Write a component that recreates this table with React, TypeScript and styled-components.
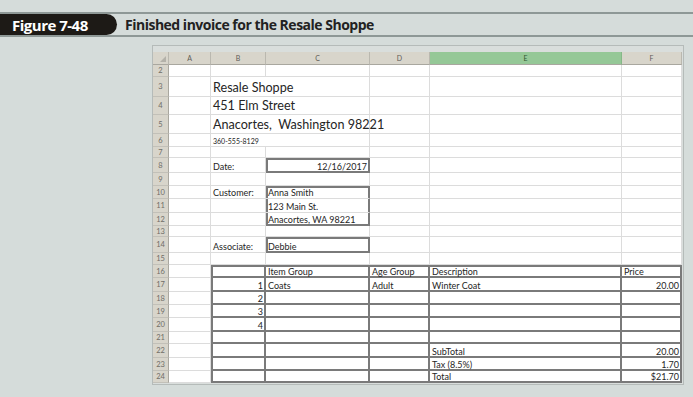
import React from "react";
import styled, { createGlobalStyle } from "styled-components";

const GlobalStyle = createGlobalStyle`
  body {
    margin: 0;
    background: #d5dcda;
  }
`;

const COLS = [42, 55, 104, 60, 192, 60];
const LETTERS = ["A", "B", "C", "D", "E", "F"];
const HEIGHTS = [12, 20, 18, 19, 13, 11, 15, 13, 13, 14, 13, 11, 16, 12, 13, 14, 13, 13, 14, 12, 14, 13, 12];
const LINE = "#7a7a7a";

const Page = styled.div`
  width: 693px;
  height: 397px;
  overflow: hidden;
  background: #d5dcda;
  padding-top: 12px;
  box-sizing: border-box;
`;

const Band = styled.div`
  display: flex;
  align-items: stretch;
  height: 21px;
  border-top: 2px solid #8e9896;
  border-bottom: 2px solid #8e9896;
`;

const Pill = styled.div`
  width: 105px;
  padding-left: 12px;
  display: flex;
  align-items: center;
  background: #1d1a16;
  color: #fff;
  font: bold 15px "Open Sans", sans-serif;
  letter-spacing: -0.5px;
  border-radius: 0 12px 12px 0;
`;

const Title = styled.div`
  margin-left: 8px;
  display: flex;
  align-items: center;
  color: #222;
  font: bold 14px "Open Sans", sans-serif;
  letter-spacing: -0.5px;
`;

const Frame = styled.div`
  margin: 8px 0 0 152px;
  width: fit-content;
  border: 1px solid #b5bbb9;
  padding: 6px 1px 1px 0;
  background: #d9dedc;
`;

const Sheet = styled.div`
  display: grid;
  grid-template-columns: 16px ${COLS.map((c) => c + "px").join(" ")};
  grid-template-rows: 13px ${HEIGHTS.map((h) => h + "px").join(" ")};
  background: #fff;
  font-family: Lato, "Liberation Sans", sans-serif;
`;

const Corner = styled.div`
  position: relative;
  background: #d8d5cb;
  border-right: 1px solid #bab8af;
  border-bottom: 1px solid #a9a79f;

  &::after {
    content: "";
    position: absolute;
    right: 2px;
    bottom: 2px;
    border-style: solid;
    border-width: 0 0 6px 6px;
    border-color: transparent transparent #b3b1a9 transparent;
  }
`;

const ColHead = styled.div<{ $active?: boolean }>`
  display: flex;
  align-items: center;
  justify-content: center;
  background: ${(p) => (p.$active ? "#95c897" : "#d8d5cb")};
  color: ${(p) => (p.$active ? "#2f5a30" : "#5e5c57")};
  border-right: 1px solid ${(p) => (p.$active ? "#86b888" : "#bab8af")};
  border-bottom: 1px solid #a9a79f;
  font-size: 7px;
`;

const RowHead = styled.div`
  display: flex;
  align-items: center;
  justify-content: center;
  background: #d8d5cb;
  color: #6f6d67;
  border-right: 1px solid #a9a79f;
  border-bottom: 1px solid #c2c0b8;
  font-size: 7.5px;
`;

type Edges = { $t?: boolean; $r?: boolean; $b?: boolean; $l?: boolean };

const edgeShadow = (p: Edges) => {
  const s: string[] = [];
  if (p.$t) s.push(`inset 0 2px 0 ${LINE}`);
  if (p.$l) s.push(`inset 2px 0 0 ${LINE}`);
  if (p.$r) s.push(`inset -1px 0 0 ${LINE}`);
  if (p.$b) s.push(`inset 0 -1px 0 ${LINE}`);
  return s.length ? s.join(", ") : "none";
};

const Cell = styled.div<Edges & { $align?: string; $size?: number; $span?: number }>`
  grid-column: span ${(p) => p.$span || 1};
  display: flex;
  align-items: flex-end;
  justify-content: ${(p) => (p.$align === "r" ? "flex-end" : "flex-start")};
  padding: 0 2px 1px 2px;
  box-sizing: border-box;
  min-width: 0;
  white-space: pre;
  overflow: visible;
  color: #252525;
  font-size: ${(p) => p.$size || 9}px;
  line-height: 1;
  border-right: 1px solid ${(p) => (p.$r ? LINE : "#dcdcdc")};
  border-bottom: 1px solid ${(p) => (p.$b ? LINE : "#dcdcdc")};
  box-shadow: ${edgeShadow};
`;

type Def = { t?: string; a?: string; size?: number; span?: number; e?: string };
type Row = { [col: number]: Def };

const BIG = 12.6;

const box = (row: number, col: number, t?: string, a?: string): Def => ({
  t,
  a,
  e: "rb" + (row === 16 ? "t" : "") + (col === 1 ? "l" : ""),
});

const tableRow = (row: number, vals: (string | undefined)[], aligns: (string | undefined)[] = []): Row => {
  const r: Row = {};
  for (let c = 1; c <= 5; c++) r[c] = box(row, c, vals[c - 1], aligns[c - 1]);
  return r;
};

const ROWS: Row[] = [
  {},
  { 1: { t: "Resale Shoppe", size: BIG, span: 2 } },
  { 1: { t: "451 Elm Street", size: BIG, span: 2 } },
  { 1: { t: "Anacortes,  Washington 98221", size: BIG, span: 2 } },
  { 1: { t: "360-555-8129", size: 7, span: 2 } },
  {},
  { 1: { t: "Date:" }, 2: { t: "12/16/2017", a: "r", e: "trbl" } },
  {},
  { 1: { t: "Customer:" }, 2: { t: "Anna Smith", e: "trl" } },
  { 2: { t: "123 Main St.", e: "rl" } },
  { 2: { t: "Anacortes, WA 98221", e: "rbl" } },
  {},
  { 1: { t: "Associate:" }, 2: { t: "Debbie", e: "trbl" } },
  {},
  tableRow(16, [undefined, "Item Group", "Age Group", "Description", "Price"]),
  tableRow(17, ["1", "Coats", "Adult", "Winter Coat", "20.00"], ["r", , , , "r"]),
  tableRow(18, ["2"], ["r"]),
  tableRow(19, ["3"], ["r"]),
  tableRow(20, ["4"], ["r"]),
  tableRow(21, []),
  tableRow(22, [, , , "SubTotal", "20.00"], [, , , , "r"]),
  tableRow(23, [, , , "Tax (8.5%)", "1.70"], [, , , , "r"]),
  tableRow(24, [, , , "Total", "$21.70"], [, , , , "r"]),
];

function renderRow(row: Row, i: number) {
  const num = i + 2;
  const cells: React.ReactNode[] = [<RowHead key="h">{num}</RowHead>];
  for (let c = 0; c < 6; c++) {
    const d = row[c] || {};
    const e = d.e || "";
    cells.push(
      <Cell
        key={c}
        $span={d.span}
        $align={d.a}
        $size={d.size}
        $t={e.includes("t")}
        $r={e.includes("r")}
        $b={e.includes("b")}
        $l={e.includes("l")}
      >
        {d.t}
      </Cell>
    );
    if (d.span) c += d.span - 1;
  }
  return <React.Fragment key={num}>{cells}</React.Fragment>;
}

export default function App() {
  return (
    <Page>
      <GlobalStyle />
      <Band>
        <Pill>Figure 7-48</Pill>
        <Title>Finished invoice for the Resale Shoppe</Title>
      </Band>
      <Frame>
        <Sheet>
          <Corner />
          {LETTERS.map((l) => (
            <ColHead key={l} $active={l === "E"}>
              {l}
            </ColHead>
          ))}
          {ROWS.map(renderRow)}
        </Sheet>
      </Frame>
    </Page>
  );
}
